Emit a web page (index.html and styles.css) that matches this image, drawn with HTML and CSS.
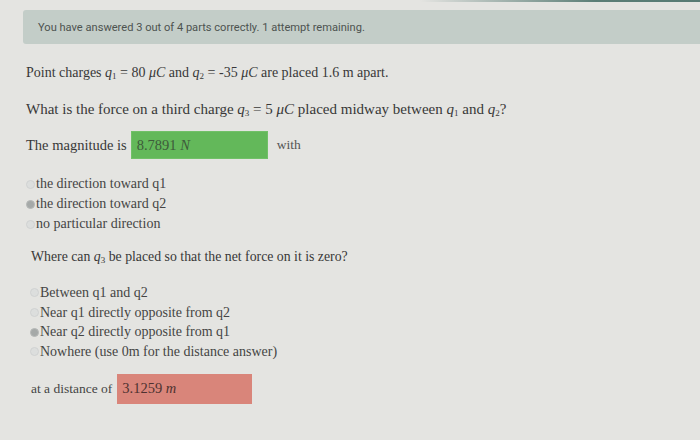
FILE: index.html
```html
<!DOCTYPE html>
<html>
<head>
<meta charset="utf-8">
<link rel="stylesheet" href="styles.css">
</head>
<body>
<div class="topline"></div>
<div class="banner">You have answered 3 out of 4 parts correctly. 1 attempt remaining.</div>
<div class="content">
  <p class="p1">Point charges <i>q</i><sub>1</sub> = 80 <i>μC</i> and <i>q</i><sub>2</sub> = -35 <i>μC</i> are placed 1.6 m apart.</p>
  <p class="p2">What is the force on a third charge <i>q</i><sub>3</sub> = 5 <i>μC</i> placed midway between <i>q</i><sub>1</sub> and <i>q</i><sub>2</sub>?</p>
  <div class="row mag">
    <span class="label">The magnitude is</span>
    <span class="box green"><span>8.7891 <i>N</i></span></span>
    <span class="after">with</span>
  </div>
  <ul class="radios r1">
    <li><span class="dot"></span>the direction toward q1</li>
    <li><span class="dot on"></span>the direction toward q2</li>
    <li><span class="dot"></span>no particular direction</li>
  </ul>
  <p class="p3">Where can <i>q</i><sub>3</sub> be placed so that the net force on it is zero?</p>
  <ul class="radios r2">
    <li><span class="dot"></span>Between q1 and q2</li>
    <li><span class="dot"></span>Near q1 directly opposite from q2</li>
    <li><span class="dot on"></span>Near q2 directly opposite from q1</li>
    <li><span class="dot"></span>Nowhere (use 0m for the distance answer)</li>
  </ul>
  <div class="row dist">
    <span class="label small">at a distance of</span>
    <span class="box red"><span>3.1259 <i>m</i></span></span>
  </div>
</div>
</body>
</html>
```
FILE: styles.css
```css
html, body {
  margin: 0;
  padding: 0;
}
body {
  background: #e4e4e1;
  width: 700px;
  height: 440px;
  overflow: hidden;
  font-family: "Liberation Serif", "DejaVu Serif", serif;
  color: #383838;
}
.topline {
  height: 2px;
  background: linear-gradient(to right, rgba(90,125,118,0) 0%, rgba(90,125,118,0) 60%, #5b7d76 85%, #577a73 100%);
}
.banner {
  margin: 8px 0 0 23px;
  height: 34px;
  display: flex;
  align-items: center;
  padding-left: 15px;
  background: #c3cdc8;
  border-radius: 3px 0 0 3px;
  font-family: Roboto, "Liberation Sans", sans-serif;
  font-size: 11.1px;
  color: #4d5350;
}
.content {
  padding-left: 26px;
}
p {
  margin: 0;
  font-size: 14.5px;
  line-height: 20px;
}
sub {
  font-size: 9px;
  vertical-align: -2px;
  line-height: 0;
}
.p1 { margin-top: 19px; font-size: 14px; }
.p2 { margin-top: 16px; font-size: 15px; }
.row {
  display: flex;
  align-items: center;
}
.mag { margin-top: 12px; }
.label {
  font-size: 14.5px;
}
.label.small {
  font-size: 13.5px;
  color: #444;
}
.box {
  display: flex;
  align-items: center;
  height: 28px;
  padding-left: 5px;
  font-size: 14.5px;
  box-sizing: border-box;
}
.green {
  width: 137px;
  margin-left: 4px;
  background: #63b85a;
  color: #3e5b3a;
  border: 1px solid #71c068;
}
.red {
  width: 135px;
  margin-left: 5px;
  height: 30px;
  background: #d9857a;
  color: #4e3230;
}
.after {
  margin-left: 9px;
  font-size: 13.5px;
  color: #555;
}
.radios {
  list-style: none;
  margin: 0;
  padding: 0;
  font-size: 14px;
  color: #444;
}
.radios li {
  display: flex;
  align-items: center;
  height: 20px;
}
.r1 { margin-top: 15px; }
.r2 { margin-top: 16px; margin-left: 4px; }
.r2 li { height: 19.7px; }
.dot {
  width: 7px;
  height: 7px;
  border-radius: 50%;
  border: 1px solid #d0d2d2;
  background: #dcdedd;
  margin-right: 1px;
  flex: none;
}
.dot.on {
  background: #a5a9a8;
  border-color: #b5b8b7;
}
.p3 { margin-top: 13px; margin-left: 5px; font-size: 13.8px; }
.dist { margin-top: 12px; margin-left: 5px; }
```
